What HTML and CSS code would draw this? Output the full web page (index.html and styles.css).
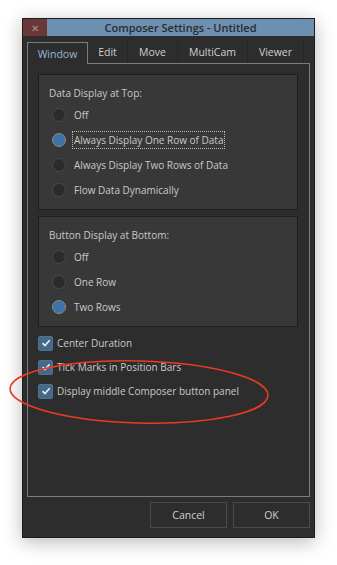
FILE: index.html
```html
<!DOCTYPE html>
<html lang="en">
<head>
    <meta charset="UTF-8">
    <title>Composer Settings - Untitled</title>
    <link rel="stylesheet" href="styles.css">
</head>
<body>
    <div class="dialog">
        <div class="title-bar">
            <div class="close-btn">&#x2715;</div>
            <div class="title">Composer Settings - Untitled</div>
        </div>
        <div class="tabs">
            <div class="tab active">Window</div>
            <div class="tab">Edit</div>
            <div class="tab">Move</div>
            <div class="tab">MultiCam</div>
            <div class="tab">Viewer</div>
        </div>
        <div class="tab-panel">
            <div class="group">
                <div class="group-label">Data Display at Top:</div>
                <div class="radio-row"><span class="radio"></span><span>Off</span></div>
                <div class="radio-row"><span class="radio on"></span><span class="focus">Always Display One Row of Data</span></div>
                <div class="radio-row"><span class="radio"></span><span>Always Display Two Rows of Data</span></div>
                <div class="radio-row"><span class="radio"></span><span>Flow Data Dynamically</span></div>
            </div>
            <div class="group group-2">
                <div class="group-label">Button Display at Bottom:</div>
                <div class="radio-row"><span class="radio"></span><span>Off</span></div>
                <div class="radio-row"><span class="radio"></span><span>One Row</span></div>
                <div class="radio-row"><span class="radio on"></span><span>Two Rows</span></div>
            </div>
            <div class="checks">
                <div class="check-row"><span class="checkbox"><svg width="10" height="10" viewBox="0 0 10 10"><path d="M1.5 5.2 L4 7.6 L8.6 2.2" fill="none" stroke="#e8eef5" stroke-width="1.6"/></svg></span><span>Center Duration</span></div>
                <div class="check-row"><span class="checkbox"><svg width="10" height="10" viewBox="0 0 10 10"><path d="M1.5 5.2 L4 7.6 L8.6 2.2" fill="none" stroke="#e8eef5" stroke-width="1.6"/></svg></span><span>Tick Marks in Position Bars</span></div>
                <div class="check-row"><span class="checkbox"><svg width="10" height="10" viewBox="0 0 10 10"><path d="M1.5 5.2 L4 7.6 L8.6 2.2" fill="none" stroke="#e8eef5" stroke-width="1.6"/></svg></span><span>Display middle Composer button panel</span></div>
            </div>
        </div>
        <div class="buttons">
            <div class="btn">Cancel</div>
            <div class="btn">OK</div>
        </div>
    </div>
    <svg class="annotation" width="337" height="565" viewBox="0 0 337 565">
        <ellipse cx="139" cy="392" rx="129" ry="31" fill="none" stroke="#ec3b22" stroke-width="1.6" transform="rotate(1.5 139 392)"/>
    </svg>
</body>
</html>
```

FILE: styles.css
```css
body { margin: 0; padding: 18px 0 0 22px; background: #fff; font-family: "Open Sans", "Noto Sans", sans-serif; font-size: 10px; color: #c9c9c9; position: relative; width: 337px; height: 565px; box-sizing: border-box; overflow: hidden; }
.dialog { width: 293px; height: 520px; background: #2d2d2d; box-sizing: border-box; border: 1px solid #1c1c1c; box-shadow: 0 4px 18px rgba(0, 0, 0, 0.28); display: flex; flex-direction: column; }
.title-bar { display: flex; height: 17px; background: #6e90b0; }
.close-btn { width: 24px; background: #6a3838; color: #b09494; font-size: 10px; display: flex; align-items: center; justify-content: center; }
.title { flex: 1; text-align: center; color: #272b30; font-weight: 600; font-size: 11px; line-height: 17px; }
.tabs { display: flex; margin: 5px 0 0 4px; height: 22px; }
.tab { line-height: 22px; font-size: 10.5px; color: #cfcfcf; border-right: 1px solid #262626; box-sizing: border-box; text-align: center; }
.tab.active { width: 61px; color: #96b6d6; border: 1px solid #7c7c7c; border-bottom: none; background: #2d2d2d; position: relative; top: 1px; }
.tab:nth-child(2) { width: 40px; }
.tab:nth-child(3) { width: 50px; }
.tab:nth-child(4) { width: 70px; }
.tab:nth-child(5) { width: 56px; }
.tab-panel { margin: 0 4px; height: 434px; box-sizing: border-box; border: 1px solid #7c7c7c; padding: 10px 11px 0 10px; }
.group { background: #383838; border: 1px solid #1f1f1f; height: 136px; box-sizing: border-box; padding: 11px 0 0 13px; }
.group-2 { height: 111px; margin-top: 6px; }
.group-label { line-height: 14px; margin-bottom: 2px; margin-left: -3px; }
.radio-row { display: flex; align-items: center; height: 25px; }
.radio { width: 12px; height: 12px; border-radius: 50%; background: #2b2b2b; border: 1px solid #4a4a4a; margin-right: 8px; flex-shrink: 0; }
.radio.on { background: #3d74a8; border-color: #8a8a8a; }
.focus { outline: 1px dotted #bdbdbd; padding: 1px 1px; margin-left: -1px; }
.checks { margin-top: 4px; }
.check-row { display: flex; align-items: center; height: 24px; }
.checkbox { width: 13px; height: 13px; border-radius: 2px; background: #44698f; border: 1px solid #5b6e82; display: flex; align-items: center; justify-content: center; margin-right: 4px; flex-shrink: 0; }
.buttons { display: flex; justify-content: flex-end; gap: 6px; margin: 5px 4px 0 0; }
.btn { width: 77px; height: 26px; box-sizing: border-box; border: 1px solid #4a4a4a; text-align: center; line-height: 24px; font-size: 10.5px; color: #cfcfcf; }
.annotation { position: absolute; left: 0; top: 0; pointer-events: none; }
```
